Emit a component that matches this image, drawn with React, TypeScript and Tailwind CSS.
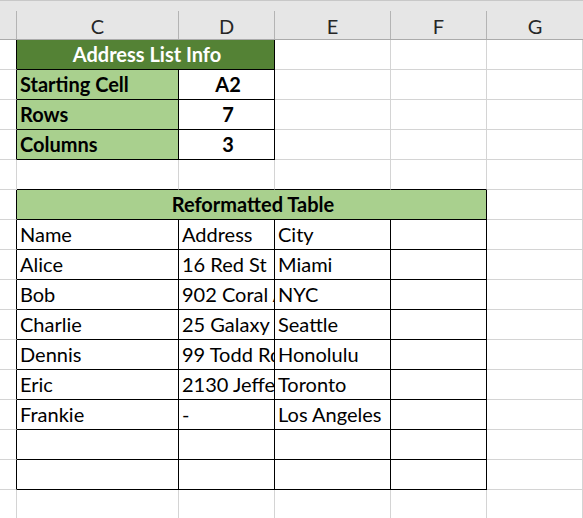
import React from 'react';
import clsx from 'clsx';

type CellProps = {
  r?: boolean;
  b?: boolean;
  className?: string;
  children?: React.ReactNode;
};

const Cell: React.FC<CellProps> = ({ r = false, b = false, className, children }) => (
  <div
    className={clsx(
      'flex items-end overflow-hidden whitespace-nowrap border-r border-b pl-[3px] pb-[3px] leading-[24px]',
      r ? 'border-r-black' : 'border-r-[#d4d4d4]',
      b ? 'border-b-black' : 'border-b-[#d4d4d4]',
      className
    )}
  >
    {children}
  </div>
);

const HeaderCell: React.FC<{ label?: string; sep?: boolean }> = ({ label, sep = true }) => (
  <div className="flex border-t border-b border-t-[#c8c8c8] border-b-[#ababab] bg-[#e6e6e6]">
    <div className="flex flex-1 items-end justify-center pb-[1px] text-[20px] leading-[24px] text-[#262626]">
      {label}
    </div>
    {sep && <div className="h-[28px] w-px self-end bg-[#b4b4b4]" />}
  </div>
);

const addressInfo = [
  ['Starting Cell', 'A2'],
  ['Rows', '7'],
  ['Columns', '3'],
];

const tableRows = [
  ['Name', 'Address', 'City'],
  ['Alice', '16 Red St', 'Miami'],
  ['Bob', '902 Coral Ave', 'NYC'],
  ['Charlie', '25 Galaxy Rd', 'Seattle'],
  ['Dennis', '99 Todd Rd', 'Honolulu'],
  ['Eric', '2130 Jefferson St', 'Toronto'],
  ['Frankie', '-', 'Los Angeles'],
  ['', '', ''],
  ['', '', ''],
];

const App: React.FC = () => {
  return (
    <div
      className="h-[518px] w-[583px] overflow-hidden bg-white text-[20px] text-black"
      style={{ fontFamily: 'Lato, "Noto Sans", sans-serif' }}
    >
      <div className="grid grid-cols-[17px_162px_96px_116px_96px_1fr] grid-rows-[40px_repeat(17,30px)]">
        {/* Column headers */}
        <HeaderCell />
        <HeaderCell label="C" />
        <HeaderCell label="D" />
        <HeaderCell label="E" />
        <HeaderCell label="F" />
        <HeaderCell label="G" sep={false} />

        {/* Address List Info */}
        <Cell r />
        <Cell r b className="col-span-2 justify-center bg-[#548235] font-bold text-white">
          Address List Info
        </Cell>
        <Cell />
        <Cell />
        <Cell />

        {addressInfo.map(([label, value]) => (
          <React.Fragment key={label}>
            <Cell r />
            <Cell r b className="bg-[#a9d08e] font-bold">
              {label}
            </Cell>
            <Cell r b className="justify-center font-bold">
              {value}
            </Cell>
            <Cell />
            <Cell />
            <Cell />
          </React.Fragment>
        ))}

        {/* Spacer row above the second table */}
        <Cell />
        <Cell b />
        <Cell b />
        <Cell b />
        <Cell b />
        <Cell />

        {/* Reformatted Table */}
        <Cell r />
        <Cell r b className="col-span-4 justify-center bg-[#a9d08e] font-bold">
          Reformatted Table
        </Cell>
        <Cell />

        {tableRows.map((row, i) => (
          <React.Fragment key={i}>
            <Cell r />
            <Cell r b>{row[0]}</Cell>
            <Cell r b>{row[1]}</Cell>
            <Cell r b>{row[2]}</Cell>
            <Cell r b />
            <Cell />
          </React.Fragment>
        ))}

        {[0, 1].map((i) => (
          <React.Fragment key={`empty-${i}`}>
            <Cell />
            <Cell />
            <Cell />
            <Cell />
            <Cell />
            <Cell />
          </React.Fragment>
        ))}
      </div>
    </div>
  );
};

export default App;
